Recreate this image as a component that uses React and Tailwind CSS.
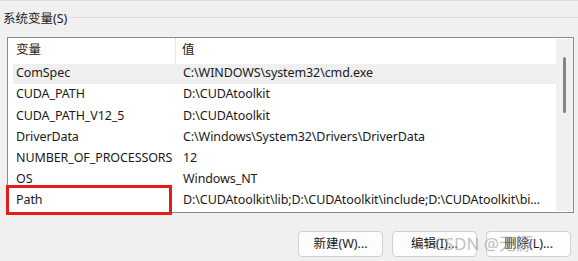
import React from "react";

const rows = [
  ["ComSpec", "C:\\WINDOWS\\system32\\cmd.exe", true],
  ["CUDA_PATH", "D:\\CUDAtoolkit"],
  ["CUDA_PATH_V12_5", "D:\\CUDAtoolkit"],
  ["DriverData", "C:\\Windows\\System32\\Drivers\\DriverData"],
  ["NUMBER_OF_PROCESSORS", "12"],
  ["OS", "Windows_NT"],
  ["Path", "D:\\CUDAtoolkit\\lib;D:\\CUDAtoolkit\\include;D:\\CUDAtoolkit\\bi..."],
];

export default function App() {
  return (
    <div
      className="relative w-[578px] h-[261px] overflow-hidden bg-[#f0f0f0] text-[#1a1a1a]"
      style={{ fontFamily: '"Noto Sans", "Noto Sans CJK SC", sans-serif' }}
    >
      <div className="h-px bg-[#dcdcdc]" />
      <div className="flex items-center h-[36px] pb-[1px]">
        <span className="pl-[3px] pr-[3px] text-[12.5px] leading-none mt-[1px]">系统变量(S)</span>
        <div className="flex-1 h-px bg-[#dcdcdc] mt-[-2px]" />
      </div>
      <div className="ml-[7px] w-[567px] h-[176px] border border-[#8a8a8a] bg-white flex">
        <div className="flex-1 flex flex-col">
          <div className="flex h-[25px] items-center text-[12.5px]">
            <div className="w-[168px] pl-[8px] h-full flex items-center border-r border-[#e5e5e5]">变量</div>
            <div className="pl-[6px]">值</div>
          </div>
          {rows.map(([k, v, hl]) => (
            <div key={k} className="h-[21.2px] flex items-center pl-[5px]">
              <div className={`flex-1 h-[20px] flex items-center text-[12.5px] tracking-[-0.1px] whitespace-nowrap ${hl ? "bg-[#efefef]" : ""}`}>
                <div className="w-[170px] pl-[3px]">{k}</div>
                <div>{v}</div>
              </div>
            </div>
          ))}
        </div>
        <div className="w-[17px] bg-[#f0f0f0] flex justify-center pt-[18px] mt-[1px] mb-[1px]">
          <div className="w-[2.5px] h-[56px] rounded-full bg-[#858585]" />
        </div>
      </div>
      <div className="flex gap-[9px] pl-[298px] pt-[18px]">
        {["新建(W)...", "编辑(I)...", "删除(L)..."].map((t) => (
          <div
            key={t}
            className="w-[85px] h-[26px] rounded-[4px] border border-[#d0d0d0] bg-[#fdfdfd] flex items-center justify-center text-[12.5px]"
          >
            {t}
          </div>
        ))}
      </div>
      <div className="absolute left-[6px] top-[185px] w-[166px] h-[30px] border-[3px] border-[#e31c1c]" />
      <div className="absolute left-[434px] top-[231px] text-[17px] text-[#9a9a9a] opacity-60 whitespace-nowrap">
        CSDN @无源
      </div>
    </div>
  );
}
